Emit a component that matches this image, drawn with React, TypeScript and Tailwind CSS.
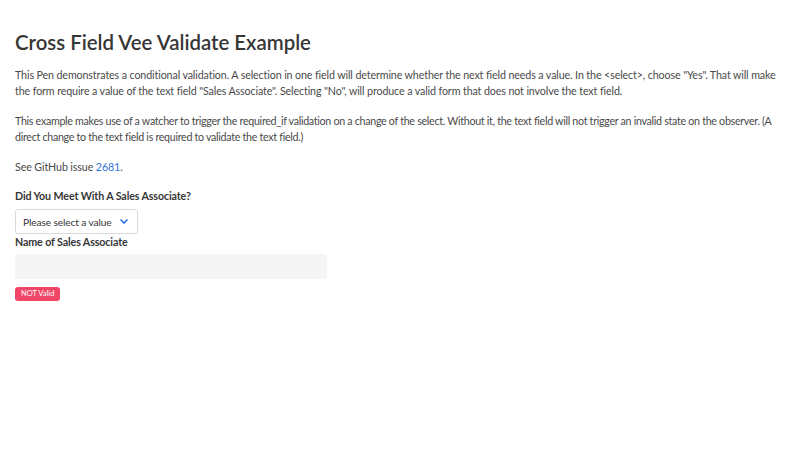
export default function App() {
  return (
    <div className="min-h-[450px] bg-white px-[15px] pt-[28px] font-['Lato',sans-serif] text-[10.7px] leading-[16px] tracking-[-0.12px] text-[#4a4a4a]">
      <h1 className="text-[20.4px] font-semibold leading-[28px] tracking-normal text-[#363636]">Cross Field Vee Validate Example</h1>
      <p className="mt-[11px]">
        This Pen demonstrates a conditional validation. A selection in one field will determine whether the next field needs a value. In the &lt;select&gt;, choose "Yes". That will make the form require a value of the text field "Sales Associate". Selecting "No", will produce a valid form that does not involve the text field.
      </p>
      <p className="mt-[14px] tracking-[-0.3px]">
        This example makes use of a watcher to trigger the required_if validation on a change of the select. Without it, the text field will not trigger an invalid state on the observer. (A direct change to the text field is required to validate the text field.)
      </p>
      <p className="mt-[14px]">
        See GitHub issue <a className="text-[#3273dc]">2681</a>.
      </p>
      <div className="mt-[13px] font-bold text-[#363636]">Did You Meet With A Sales Associate?</div>
      <div className="mt-[5px] flex h-[25px] w-[123px] items-center gap-[7px] whitespace-nowrap rounded-[3px] border border-[#dbdbdb] pl-[7px] text-[10.2px] text-[#363636]">
        <span>Please select a value</span>
        <svg width="10" height="7" viewBox="0 0 10 7" fill="none" stroke="#3273dc" strokeWidth="1.6">
          <path d="M1.5 1.5 L5 5 L8.5 1.5" />
        </svg>
      </div>
      <div className="font-bold text-[#363636]">Name of Sales Associate</div>
      <div className="mt-[4px] h-[25px] w-[312px] rounded-[3px] bg-[#f5f5f5]" />
      <span className="mt-[8px] inline-flex h-[14px] items-center rounded-[3px] bg-[#f14668] px-[6px] text-[7.5px] tracking-normal text-white">NOT Valid</span>
    </div>
  )
}
